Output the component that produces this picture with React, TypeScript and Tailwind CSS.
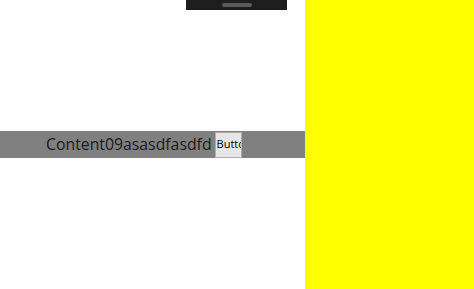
export default function App() {
  return (
    <div className="flex h-[289px] w-[474px] overflow-hidden bg-white font-['Open_Sans',sans-serif]">
      <div className="flex w-[305px] flex-col">
        <div className="ml-[186px] flex h-[10px] w-[101px] items-start justify-center bg-[#1e1e1e] pt-[3px]">
          <div className="h-[4px] w-[30px] rounded-full bg-[#5a5a5a]" />
        </div>
        <div className="mt-[121px] flex h-[27px] items-center bg-[#808080] pl-[46px]">
          <span className="text-[15.8px] leading-none text-[#1a1a1a]">Content09asasdfasdfd</span>
          <div className="ml-[3px] flex h-[26px] w-[27px] items-center overflow-hidden border border-[#adadad] bg-[#e6e6e6] pl-[1px]">
            <span className="whitespace-nowrap text-[11px] text-black">Button</span>
          </div>
        </div>
      </div>
      <div className="flex-1 bg-[#ffff00]" />
    </div>
  );
}
